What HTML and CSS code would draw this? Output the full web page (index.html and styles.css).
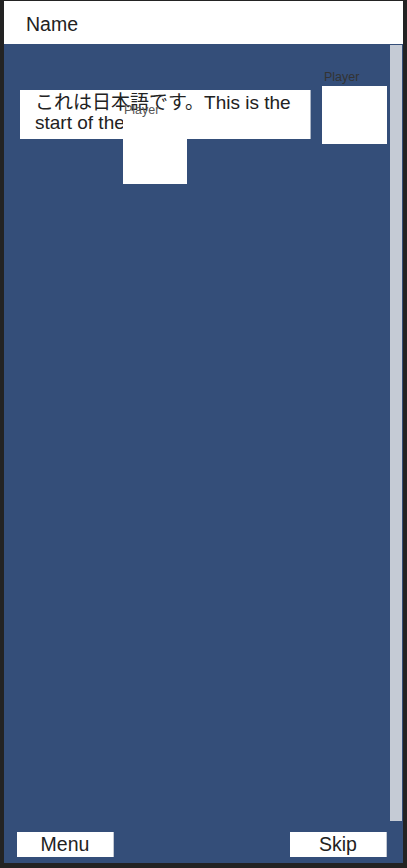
FILE: index.html
```html
<!DOCTYPE html>
<html lang="ja">
<head>
<meta charset="utf-8">
<title>Scene</title>
<link rel="stylesheet" href="styles.css">
</head>
<body>
<div class="window">
  <header class="header">Name</header>
  <section class="stage">
    <div class="main">
      <div class="canvas">
        <div class="dialog">これは日本語です。This is the start of the scene.</div>
        <div class="player player-a">
          <div class="player-label">Player</div>
          <div class="player-body player-body-a"></div>
        </div>
        <div class="player player-b">
          <div class="player-label">Player</div>
          <div class="player-body player-body-b"></div>
        </div>
      </div>
      <div class="scrollbar"></div>
    </div>
    <footer class="footer">
      <button class="btn">Menu</button>
      <button class="btn">Skip</button>
    </footer>
  </section>
</div>
</body>
</html>
```
FILE: styles.css
```css
* { box-sizing: border-box; }
html, body {
  margin: 0;
  padding: 0;
  background: #232323;
}
body {
  font-family: "Liberation Sans", Arial, "Noto Sans CJK JP", sans-serif;
  color: #222;
}
.window {
  width: 407px;
  height: 868px;
  padding: 1px 4px 5px 4px;
  display: flex;
  flex-direction: column;
}
.header {
  height: 43px;
  background: #fff;
  padding: 4px 0 0 22px;
  font-size: 19.5px;
  line-height: 39px;
  color: #222;
}
.stage {
  flex: 1;
  background: #344e79;
  display: flex;
  flex-direction: column;
}
.main {
  height: 777px;
  display: flex;
}
.canvas {
  flex: 1;
  position: relative;
  overflow: hidden;
}
.scrollbar {
  width: 12px;
  margin: 1px 1px 0 0;
  background: #c5cbd5;
}
.dialog {
  margin: 46px 0 0 16px;
  width: 290px;
  height: 49px;
  background: #fff;
  box-shadow: 1px 0 0 #a9b3c4;
  padding: 3px 6px 0 15px;
  font-family: "Liberation Sans", Arial, "Noto Sans CJK JP", sans-serif;
  font-size: 19px;
  line-height: 20px;
  color: #222;
  overflow: hidden;
}
.player {
  position: absolute;
  display: flex;
  flex-direction: column;
}
.player-a { left: 119px; top: 59px; }
.player-b { left: 318px; top: 26px; }
.player-label {
  font-size: 12.5px;
  line-height: 14px;
  color: #333;
  padding-left: 2px;
}
.player-a .player-label { color: #555; padding-left: 1px; }
.player-body { background: #fff; }
.player-body-a { width: 64px; height: 66px; margin-top: 1px; }
.player-body-b { width: 65px; height: 58px; margin-top: 2px; }
.footer {
  flex: 1;
  display: flex;
  justify-content: space-between;
  align-items: flex-start;
  padding: 11px 16px 0 13px;
}
.btn {
  width: 97px;
  height: 25px;
  border: 0;
  border-right: 1px solid #c2c8d2;
  border-radius: 0;
  background: #fff;
  padding: 0;
  margin: 0;
  font-family: "Liberation Sans", Arial, sans-serif;
  font-size: 19.5px;
  line-height: 25px;
  color: #222;
  text-align: center;
}
```
